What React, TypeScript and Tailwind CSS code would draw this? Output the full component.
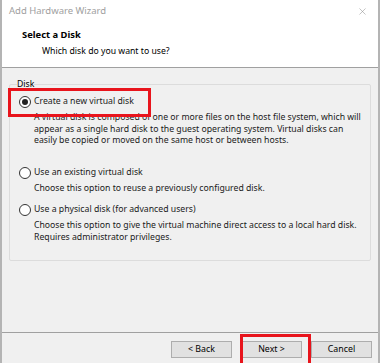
import { X } from 'lucide-react';

const FONT = { fontFamily: '"Noto Sans", "Liberation Sans", sans-serif' };

function Radio({ checked }: { checked?: boolean }) {
  return (
    <span className="flex h-[12px] w-[12px] shrink-0 items-center justify-center rounded-full border border-[#333] bg-white">
      {checked && <span className="h-[6px] w-[6px] rounded-full bg-[#222]" />}
    </span>
  );
}

function Option({ label, checked, lines }: { label: string; checked?: boolean; lines: string[] }) {
  return (
    <div className="whitespace-nowrap">
      <div className="flex items-center gap-[3px] h-[14px]">
        <Radio checked={checked} />
        <span>{label}</span>
      </div>
      <div className="pl-[15px] pt-[3px] leading-[11.5px]">
        {lines.map((l) => (
          <div key={l}>{l}</div>
        ))}
      </div>
    </div>
  );
}

function WizButton({ children }: { children: React.ReactNode }) {
  return (
    <button className="h-[17px] w-[61px] border border-[#adadad] bg-[#e1e1e1] text-[8.8px] text-black leading-none">
      {children}
    </button>
  );
}

export default function App() {
  return (
    <div
      className="relative w-[380px] h-[363px] overflow-hidden bg-[#f0f0f0] border-x-2 border-[#b4b4b4] text-[8.7px] text-[#1a1a1a] flex flex-col"
      style={FONT}
    >
      {/* title bar */}
      <div className="h-[22px] shrink-0 bg-white flex items-center justify-between pl-[7px] pr-[10px]">
        <span className="text-[9.5px] text-[#a0a0a0]">Add Hardware Wizard</span>
        <X size={11} strokeWidth={1.1} className="text-[#888]" />
      </div>

      {/* header */}
      <div className="h-[46px] shrink-0 bg-white border-b border-[#a0a0a0] pl-[20px] pt-[6px]">
        <div className="font-bold text-[9.4px] text-black leading-[14px]">Select a Disk</div>
        <div className="pl-[20px] pt-[2px] leading-[14px] text-black">Which disk do you want to use?</div>
      </div>

      {/* body */}
      <div className="flex-1 px-[7px] pt-[10px]">
        <fieldset className="h-[183px] border border-[#dcdcdc] rounded-[2px] pl-[9px] pr-[8px] pt-[5px]">
          <legend className="px-0 -ml-[2px] leading-[12px] text-black">Disk</legend>
          <Option
            checked
            label="Create a new virtual disk"
            lines={[
              'A virtual disk is composed of one or more files on the host file system, which will',
              'appear as a single hard disk to the guest operating system. Virtual disks can',
              'easily be copied or moved on the same host or between hosts.',
            ]}
          />
          <div className="mt-[19.5px]">
            <Option label="Use an existing virtual disk" lines={['Choose this option to reuse a previously configured disk.']} />
          </div>
          <div className="mt-[8.5px]">
            <Option
              label="Use a physical disk (for advanced users)"
              lines={[
                'Choose this option to give the virtual machine direct access to a local hard disk.',
                'Requires administrator privileges.',
              ]}
            />
          </div>
        </fieldset>
      </div>

      {/* footer */}
      <div className="h-[31px] shrink-0 border-t border-[#a0a0a0] flex justify-end gap-[9px] pr-[6px] pt-[8px]">
        <WizButton>&lt; Back</WizButton>
        <WizButton>Next &gt;</WizButton>
        <WizButton>Cancel</WizButton>
      </div>

      {/* annotation boxes */}
      <div className="absolute left-[6px] top-[88px] w-[143px] h-[29px] border-[3px] border-[#e8141c]" />
      <div className="absolute left-[238px] top-[334px] w-[71px] h-[32px] border-[3px] border-[#e8141c]" />
    </div>
  );
}
